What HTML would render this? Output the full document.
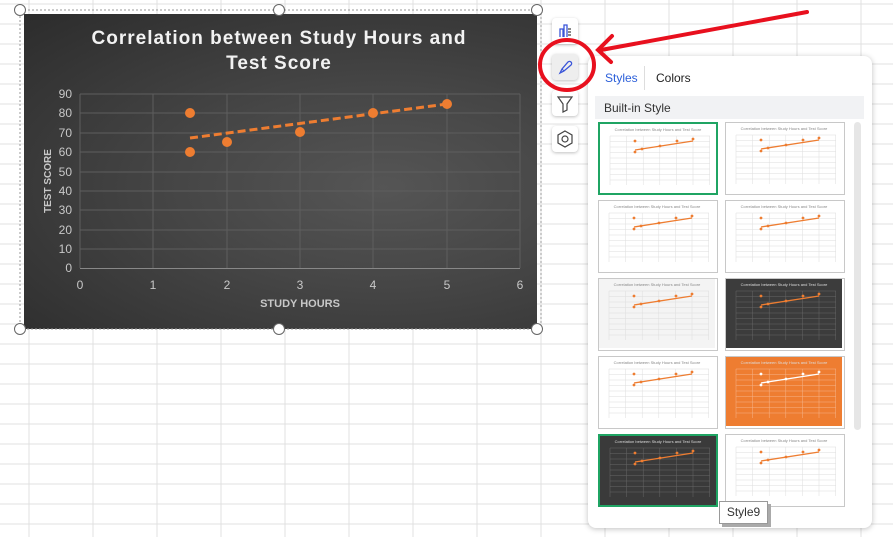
<!DOCTYPE html>
<html><head><meta charset="utf-8"><style>
body{margin:0;width:893px;height:537px;overflow:hidden;background:#fff;font-family:"Liberation Sans",sans-serif;position:relative}
#grid{position:absolute;left:0;top:0}
.chart{position:absolute;left:24px;top:14px;width:513px;height:315px;background:radial-gradient(ellipse at 70% 55%,#555 0%,#464646 40%,#2c2c2c 100%)}
.handle{position:absolute;width:10px;height:10px;border:1.3px solid #666;border-radius:50%;background:#fff}
.btn{position:absolute;left:552px;width:26px;height:26px;background:#fff;border-radius:4px;box-shadow:0 1px 3px rgba(0,0,0,.25)}
.panel{position:absolute;left:588px;top:56px;width:284px;height:472px;background:#fff;border-radius:8px;box-shadow:0 1px 6px rgba(0,0,0,.25)}
.th{position:absolute;width:118px;height:71px;border:1px solid #c8c8c8;background:#fff}
.sel{border:2px solid #1fa463;width:116px;height:69px}
</style></head><body>
<svg id="grid" width="893" height="537"></svg>
<div class="chart"></div>
<svg style="position:absolute;left:0;top:0" width="893" height="537">
<rect x="20" y="10" width="521" height="319" fill="none" stroke="#999" stroke-dasharray="2,2"/>
<g stroke="#5e5e5e" stroke-width="1">
<line x1="80" y1="94" x2="520" y2="94"/><line x1="80" y1="113" x2="520" y2="113"/><line x1="80" y1="133" x2="520" y2="133"/><line x1="80" y1="152" x2="520" y2="152"/><line x1="80" y1="172" x2="520" y2="172"/><line x1="80" y1="191" x2="520" y2="191"/><line x1="80" y1="210" x2="520" y2="210"/><line x1="80" y1="230" x2="520" y2="230"/><line x1="80" y1="249" x2="520" y2="249"/>
<line x1="153" y1="94" x2="153" y2="268"/><line x1="227" y1="94" x2="227" y2="268"/><line x1="300" y1="94" x2="300" y2="268"/><line x1="373" y1="94" x2="373" y2="268"/><line x1="447" y1="94" x2="447" y2="268"/><line x1="520" y1="94" x2="520" y2="268"/><line x1="80" y1="94" x2="80" y2="268"/>
</g>
<line x1="80" y1="268.5" x2="520" y2="268.5" stroke="#888"/>
<g fill="#c8c8c8" font-size="12" text-anchor="end"><text x="72" y="98">90</text><text x="72" y="117">80</text><text x="72" y="137">70</text><text x="72" y="156">60</text><text x="72" y="176">50</text><text x="72" y="195">40</text><text x="72" y="214">30</text><text x="72" y="234">20</text><text x="72" y="253">10</text><text x="72" y="272">0</text></g>
<g fill="#c8c8c8" font-size="12" text-anchor="middle"><text x="80" y="289">0</text><text x="153" y="289">1</text><text x="227" y="289">2</text><text x="300" y="289">3</text><text x="373" y="289">4</text><text x="447" y="289">5</text><text x="520" y="289">6</text></g>
<text x="300" y="307" fill="#c8c8c8" font-size="11" font-weight="bold" text-anchor="middle">STUDY HOURS</text>
<text transform="translate(51,181) rotate(-90)" fill="#c8c8c8" font-size="10" font-weight="bold" text-anchor="middle">TEST SCORE</text>
<text x="279" y="44" fill="#f2f2f2" font-size="19" font-weight="bold" text-anchor="middle" letter-spacing="1">Correlation between Study Hours and</text>
<text x="279" y="69" fill="#f2f2f2" font-size="19" font-weight="bold" text-anchor="middle" letter-spacing="1">Test Score</text>
<line x1="190" y1="138" x2="447" y2="104" stroke="#ee7d31" stroke-width="3" stroke-dasharray="8,4"/>
<g fill="#ee7d31"><circle cx="190" cy="113" r="5"/><circle cx="190" cy="152" r="5"/><circle cx="227" cy="142" r="5"/><circle cx="300" cy="132" r="5"/><circle cx="373" cy="113" r="5"/><circle cx="447" cy="104" r="5"/></g>
</svg>
<div class="handle" style="left:14px;top:4px"></div><div class="handle" style="left:273px;top:4px"></div><div class="handle" style="left:531px;top:4px"></div>
<div class="handle" style="left:14px;top:323px"></div><div class="handle" style="left:273px;top:323px"></div><div class="handle" style="left:531px;top:323px"></div>
<div class="btn" style="top:18px"><svg width="26" height="26"><g stroke="#3a55d9" fill="none" stroke-width="1.3"><path d="M8 19V11h3v8M12 19V7h3v12"/><path d="M16 11h3M16 14h3M16 17h3" stroke="#444"/></g></svg></div>
<div class="btn" style="top:54px;background:#eee"><svg width="26" height="26"><path d="M8 19l2-4 6-7a2 2 0 013 3l-7 6z" fill="none" stroke="#3a55d9" stroke-width="1.3"/><path d="M10 15l2 2" stroke="#3a55d9"/></svg></div>
<div class="btn" style="top:90px"><svg width="26" height="26"><path d="M6 7h14l-5 7v6l-4 2v-8z" fill="none" stroke="#444" stroke-width="1.2"/></svg></div>
<div class="btn" style="top:126px"><svg width="26" height="26"><path d="M13 5l7 4v8l-7 4-7-4V9z" fill="none" stroke="#444" stroke-width="1.2"/><circle cx="13" cy="13" r="3" fill="none" stroke="#444" stroke-width="1.2"/></svg></div>
<div class="panel">
<div style="position:absolute;left:17px;top:15px;font-size:12px;color:#2b5fd9">Styles</div>
<div style="position:absolute;left:56px;top:10px;width:1px;height:24px;background:#ddd"></div>
<div style="position:absolute;left:68px;top:15px;font-size:12px;color:#222">Colors</div>
<div style="position:absolute;left:7px;top:40px;width:269px;height:23px;background:#f1f2f4"></div>
<div style="position:absolute;left:16px;top:45px;font-size:12px;color:#333">Built-in Style</div>
<div style="position:absolute;left:266px;top:66px;width:7px;height:308px;background:#e6e6e6;border-radius:4px"></div>
<div id="thumbs"></div>
</div>
<div style="position:absolute;left:719px;top:501px;width:47px;height:21px;border:1px solid #999;background:#fff;box-shadow:3px 3px 0 #aaa;font-size:12px;color:#333;line-height:21px;text-align:center">Style9</div>
<svg style="position:absolute;left:0;top:0" width="893" height="537">
<ellipse cx="567" cy="65" rx="27" ry="25" fill="none" stroke="#e8101e" stroke-width="4"/>
<path d="M807 12L601 50M612 36L598 50L611 62" fill="none" stroke="#e8101e" stroke-width="4" stroke-linecap="round"/>
</svg>
<script>
var g=document.getElementById('grid'),s='';
for(var x=29;x<893;x+=64)s+='<line x1="'+x+'" y1="0" x2="'+x+'" y2="537" stroke="#e1e1e1"/>';
for(var y=4;y<537;y+=20)s+='<line x1="0" y1="'+y+'" x2="893" y2="'+y+'" stroke="#e1e1e1"/>';
g.innerHTML=s;
var bgs=['#fff','#fff','#fff','#fff','#f4f4f4','#3c3c3c','#fff','#ee7d31','#3a3a3a','#fff'];
var h='';
for(var i=0;i<10;i++){var c=i%2,r=Math.floor(i/2);var l=(c?137:10),t=66+r*78;var bg=bgs[i];var dark=(i==5||i==8),or=i==7;
var gl=dark?'#666':(or?'#f5b48a':'#ddd'),pc=or?'#fff':'#ee7d31';
var sv='<svg width="116" height="69"><rect width="116" height="69" fill="'+bg+'"/><text x="58" y="7" font-size="4" fill="'+(dark||or?'#ddd':'#888')+'" text-anchor="middle">Correlation between Study Hours and Test Score</text>';
for(var k=0;k<9;k++)sv+='<line x1="10" x2="110" y1="'+(12+k*5.5)+'" y2="'+(12+k*5.5)+'" stroke="'+gl+'" stroke-width=".5"/>';
for(k=0;k<7;k++)sv+='<line y1="12" y2="61" x1="'+(10+k*16.6)+'" x2="'+(10+k*16.6)+'" stroke="'+gl+'" stroke-width=".5"/>';
sv+='<line x1="35" y1="26" x2="93" y2="17" stroke="'+pc+'" stroke-width="1.3"/>';
[[35,17],[35,28],[42,25],[60,22],[77,17],[93,15]].forEach(function(p){sv+='<circle cx="'+p[0]+'" cy="'+p[1]+'" r="1.4" fill="'+pc+'"/>'});
sv+='</svg>';
h+='<div class="th'+((i==0||i==8)?' sel':'')+'" style="left:'+l+'px;top:'+t+'px;overflow:hidden">'+sv+'</div>';}
document.getElementById('thumbs').innerHTML=h;
</script>
</body></html>
